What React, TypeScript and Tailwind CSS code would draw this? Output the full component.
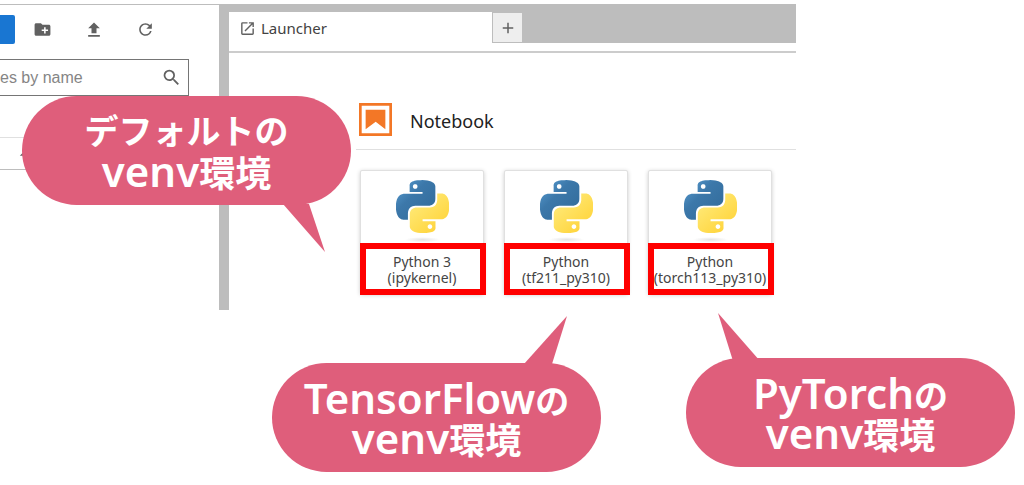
import type { ReactNode } from "react";
import {
  MdAdd,
  MdArrowDropUp,
  MdCreateNewFolder,
  MdFileUpload,
  MdLaunch,
  MdRefresh,
  MdSearch,
} from "react-icons/md";

function PythonLogo() {
  return (
    <svg viewBox="0 0 24 28" className="h-[62px] w-[53px]" aria-hidden="true">
      <defs>
        <linearGradient id="pyBlue" x1="0" y1="0" x2="1" y2="1">
          <stop offset="0" stopColor="#5a9fd4" />
          <stop offset="0.4" stopColor="#3c78aa" />
          <stop offset="1" stopColor="#306998" />
        </linearGradient>
        <linearGradient id="pyYellow" x1="0.2" y1="0.2" x2="0.8" y2="0.9">
          <stop offset="0" stopColor="#ffe873" />
          <stop offset="1" stopColor="#ffd43b" />
        </linearGradient>
        <radialGradient id="pyShadow">
          <stop offset="0" stopColor="#b8b8b8" stopOpacity="0.4" />
          <stop offset="1" stopColor="#b8b8b8" stopOpacity="0" />
        </radialGradient>
      </defs>
      <ellipse cx="12" cy="27" rx="8" ry="1.2" fill="url(#pyShadow)" />
      <path
        fill="url(#pyBlue)"
        d="M14.25.18l.9.2.73.26.59.3.45.32.34.34.25.34.16.33.1.3.04.26.02.2-.01.13V8.5l-.05.63-.13.55-.21.46-.26.38-.3.31-.33.25-.35.19-.35.14-.33.1-.3.07-.26.04-.21.02H8.77l-.69.05-.59.14-.5.22-.41.27-.33.32-.27.35-.2.36-.15.37-.1.35-.07.32-.04.27-.02.21v3.06H3.17l-.21-.03-.28-.07-.32-.12-.35-.18-.36-.26-.36-.36-.35-.46-.32-.59-.28-.73-.21-.88-.14-1.05-.05-1.23.06-1.22.16-1.04.24-.87.32-.71.36-.57.4-.44.42-.33.42-.24.4-.16.36-.1.32-.05.24-.01h.16l.06.01h8.16v-.83H6.18l-.01-2.75-.02-.37.05-.34.11-.31.17-.28.25-.26.31-.23.38-.2.44-.18.51-.15.58-.12.64-.1.71-.06.77-.04.84-.02 1.27.05zm-6.3 1.98l-.23.33-.08.41.08.41.23.34.33.22.41.09.41-.09.33-.22.23-.34.08-.41-.08-.41-.23-.33-.33-.22-.41-.09-.41.09z"
      />
      <path
        fill="url(#pyYellow)"
        d="M21.1 6.11l.28.06.32.12.35.18.36.27.36.35.35.47.32.59.28.73.21.88.14 1.04.05 1.23-.06 1.23-.16 1.04-.24.86-.32.71-.36.57-.4.45-.42.33-.42.24-.4.16-.36.09-.32.05-.24.02-.16-.01h-8.22v.82h5.84l.01 2.76.02.36-.05.34-.11.31-.17.29-.25.25-.31.24-.38.2-.44.17-.51.15-.58.13-.64.09-.71.07-.77.04-.84.01-1.27-.04-1.07-.14-.9-.2-.73-.25-.59-.3-.45-.33-.34-.34-.25-.34-.16-.33-.1-.3-.04-.25-.02-.2.01-.13v-5.34l.05-.64.13-.54.21-.46.26-.38.3-.32.33-.24.35-.2.35-.14.33-.1.3-.06.26-.04.21-.02.13-.01h5.84l.69-.05.59-.14.5-.21.41-.28.33-.32.27-.35.2-.36.15-.36.1-.35.07-.32.04-.28.02-.21V6.07h2.09l.14.01zm-6.47 14.25l-.23.33-.08.41.08.41.23.33.33.23.41.08.41-.08.33-.23.23-.33.08-.41-.08-.41-.23-.33-.33-.23-.41-.08-.41.08z"
      />
    </svg>
  );
}

function NotebookIcon() {
  return (
    <svg viewBox="1.8 1.8 18.4 18.4" className="size-[33px]" fill="#f37726" aria-hidden="true">
      <path d="M18.7 3.3v15.4H3.3V3.3h15.4m1.5-1.5H1.8v18.4h18.4z" />
      <path d="M16.5 16.5l-5.4-4.3-5.6 4.3v-11h11z" />
    </svg>
  );
}

function KernelCard({ name, env }: { name: string; env: string }) {
  return (
    <button
      type="button"
      className="relative flex h-[124px] w-[124px] flex-col items-center rounded-xs border border-[#e0e0e0] bg-white pt-[9px] shadow-[0_1px_4px_rgba(0,0,0,0.2)]"
    >
      <PythonLogo />
      <span className="mt-[12px] text-center text-[14px] leading-4 whitespace-nowrap text-[#454545]">
        {name}
        <br />
        {env}
      </span>
      <span className="absolute -left-px top-[72px] h-[52px] w-[126px] border-[6px] border-[#ff0000]" />
    </button>
  );
}

type CalloutProps = {
  place: string;
  tail: string;
  points: string;
  children: ReactNode;
};

function Callout({ place, tail, points, children }: CalloutProps) {
  return (
    <div className={`absolute h-[109px] w-[329px] rounded-full bg-[#df5e7b] pt-[15px] ${place}`}>
      <svg viewBox="0 0 50 56" className={`absolute h-[56px] w-[50px] ${tail}`} fill="#df5e7b" aria-hidden="true">
        <polygon points={points} />
      </svg>
      <div className="relative leading-10 font-semibold whitespace-nowrap text-white">
        <p className="flex h-10 items-baseline justify-center text-[34px]">{children}</p>
        <p className="flex h-10 items-baseline justify-center text-[36px]">
          <Latin>venv</Latin>環境
        </p>
      </div>
    </div>
  );
}

function Latin({ children }: { children: ReactNode }) {
  return <span className="text-[42px] leading-10">{children}</span>;
}

export default function App() {
  return (
    <div className="relative min-h-screen overflow-hidden bg-white pt-1 font-['Noto_Sans','Noto_Sans_CJK_JP',sans-serif]">
      <div className="mr-[228px] flex min-h-[306px]">
        <aside className="w-[219px] shrink-0 border-t border-[#bdbdbd]">
          <div className="flex items-center pt-[10px] text-[#616161]">
            <button type="button" aria-label="New launcher" className="h-[29px] w-[15px] rounded-r-xs bg-[#1976d2]" />
            <button type="button" aria-label="New folder" className="ml-[18px]">
              <MdCreateNewFolder size={19} />
            </button>
            <button type="button" aria-label="Upload" className="ml-8">
              <MdFileUpload size={20} />
            </button>
            <button type="button" aria-label="Refresh" className="ml-8">
              <MdRefresh size={19} />
            </button>
          </div>
          <div className="mt-[15px] mr-[30px] flex h-[37px] items-center border border-l-0 border-[#757575] pr-[6px]">
            <input
              type="text"
              aria-label="Filter files"
              placeholder="es by name"
              className="min-w-0 flex-1 bg-transparent font-['Liberation_Sans',sans-serif] text-[16px] outline-none placeholder:text-[#858585]"
            />
            <MdSearch size={21} className="text-[#616161]" />
          </div>
          <div className="mt-[41px] flex h-[33px] items-center border-y border-t-[#e0e0e0] border-b-[#bdbdbd] pl-[14px]">
            <MdArrowDropUp size={20} className="text-[#616161]" />
          </div>
        </aside>

        <main className="flex min-w-0 flex-1 bg-[#bdbdbd] pl-[10px]">
          <div className="min-w-0 flex-1 bg-white">
            <div className="flex h-[39px] items-end bg-[#bdbdbd] pt-2">
              <div className="flex h-full w-[263px] items-center gap-[5px] bg-white pt-px pl-[10px] text-[15px] text-[#424242]">
                <MdLaunch size={17} className="text-[#616161]" />
                Launcher
              </div>
              <button
                type="button"
                aria-label="Add tab"
                className="flex h-full w-[31px] items-center justify-center border border-[#bdbdbd] bg-[#eeeeee] text-[#616161]"
              >
                <MdAdd size={18} />
              </button>
            </div>
            <div className="h-[10px] border-b-2 border-[#cccccc]" />

            <section className="pt-[50px] pl-[127px]">
              <h2 className="flex h-[47px] items-start gap-[18px] border-b border-[#e0e0e0] pl-[3px] text-[18px] text-[#212121]">
                <NotebookIcon />
                <span className="pt-[5px]">Notebook</span>
              </h2>
              <div className="mt-5 flex gap-5 pl-1">
                <KernelCard name="Python 3" env="(ipykernel)" />
                <KernelCard name="Python" env="(tf211_py310)" />
                <KernelCard name="Python" env="(torch113_py310)" />
              </div>
            </section>
          </div>
        </main>
      </div>

      <Callout place="left-[22px] top-[96px]" tail="left-[256px] top-[100px]" points="5,8 31,8 47,56">
        デフォルトの
      </Callout>
      <Callout place="left-[272px] top-[363px]" tail="left-[248px] -top-[47px]" points="4,48 32,48 47,0">
        <Latin>TensorFlow</Latin>の
      </Callout>
      <Callout place="left-[686px] top-[358px]" tail="left-[28px] -top-[45px]" points="4,0 19,48 46,48">
        <Latin>PyTorch</Latin>の
      </Callout>
    </div>
  );
}
